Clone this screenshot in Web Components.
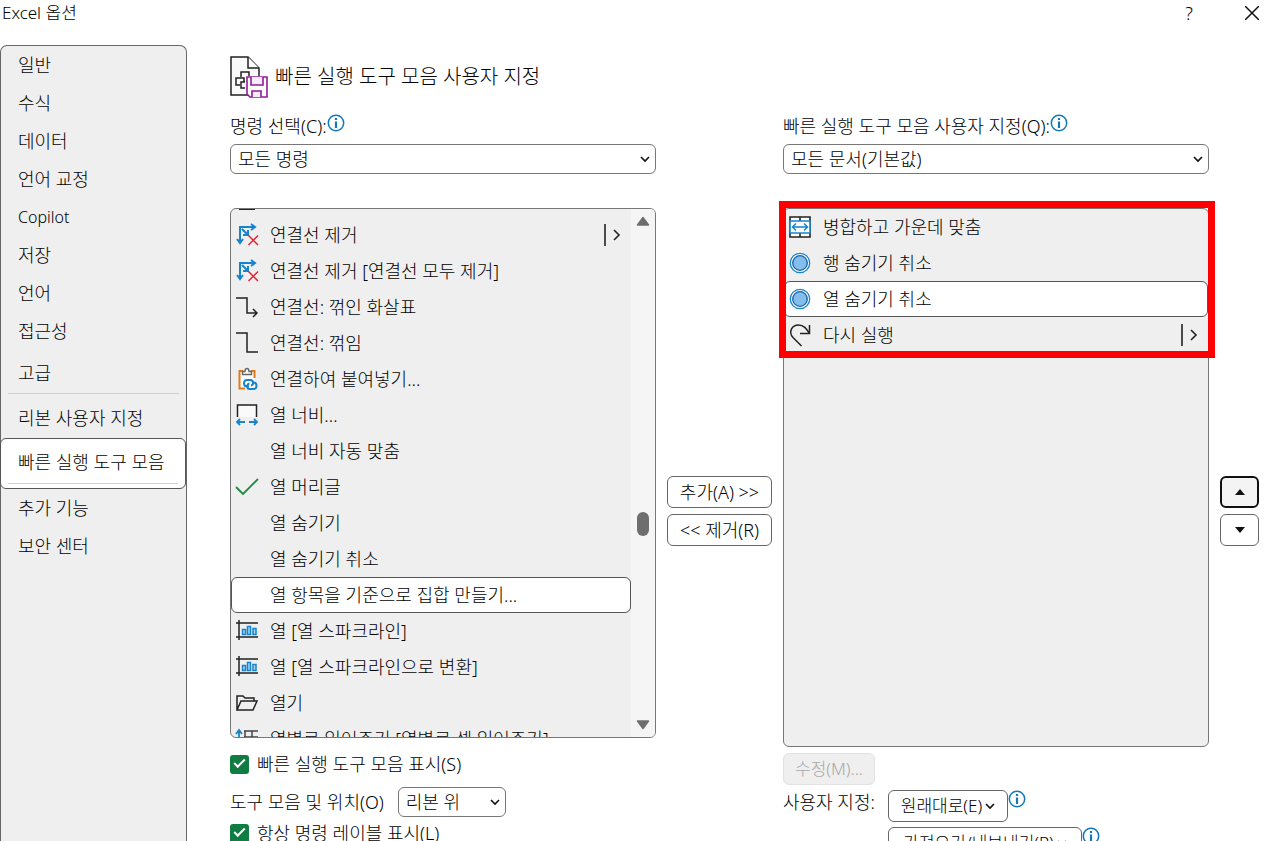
<!DOCTYPE html>
<html lang="ko">
<head>
<meta charset="utf-8">
<title>Excel 옵션</title>
<style>
  body { margin: 0; background: #fff; color: #000; font: 300 18px/24px "Noto Sans", "Noto Sans CJK KR", sans-serif; }
</style>
</head>
<body>
<options-window>
  <option-nav slot="nav">
    <nav-item>일반</nav-item>
    <nav-item>수식</nav-item>
    <nav-item>데이터</nav-item>
    <nav-item>언어 교정</nav-item>
    <nav-item latin>Copilot</nav-item>
    <nav-item>저장</nav-item>
    <nav-item>언어</nav-item>
    <nav-item>접근성</nav-item>
    <nav-item divided>고급</nav-item>
    <nav-item>리본 사용자 지정</nav-item>
    <nav-item selected>빠른 실행 도구 모음</nav-item>
    <nav-item>추가 기능</nav-item>
    <nav-item>보안 센터</nav-item>
  </option-nav>
  <toolbar-page></toolbar-page>
</options-window>

<script>
const define = (name, html, setup) => {
  const template = document.createElement('template');
  template.innerHTML = html;
  customElements.define(name, class extends HTMLElement {
    constructor() {
      super();
      this.attachShadow({ mode: 'open' }).append(template.content.cloneNode(true));
    }
    connectedCallback() { if (setup) setup(this, this.shadowRoot); }
  });
};

const ICONS = {
  removeConnector: `<g fill="none" stroke="#1683cc" stroke-width="2"><path d="M4 18V3H18M15 0l4 3-4 3M1 15l3 4 3-4"/><path d="M6 5l6 6M12 6v5H7"/></g><path d="M12.500 11.500l9.500 9.500M22 11.500l-9.500 9.500" fill="none" stroke="#e02330" stroke-width="1.500"/>`,
  sparkline: `<path d="M0 3h22M0 17h22M3 0v20" fill="none" stroke="#222" stroke-width="1.500"/><path d="M6.500 9.500h3v5h-3zM11.500 6.500h3v8h-3zM17 8.500h3v6h-3z" fill="#a9d6f5" stroke="#1683cc" stroke-width="1.500"/>`,
  dot: `<circle cx="11" cy="11" r="9.700" fill="#fff" stroke="#1683cc" stroke-width="1.300"/><circle cx="11" cy="11" r="7.300" fill="#83beec" stroke="#185fa5" stroke-width="1.300"/>`,
  elbowArrow: `<path d="M0 2h11v15h10M17 13l4 4-4 4" fill="none" stroke="#222" stroke-width="1.500"/>`,
  elbow: `<path d="M0 1h11v19h11" fill="none" stroke="#222" stroke-width="1.500"/>`,
  pasteLink: `<path d="M4 3.500v17h15v-17z" fill="#fff"/><path d="M7 3H3.500v17.500H9M15 3h3.500v7" fill="none" stroke="#e07a16" stroke-width="2"/><path d="M6.500 6.500V3.500H9C9 -.5 13 -.5 13 3.500h2.500v3z" fill="#fff" stroke="#666" stroke-width="1.400"/><path d="M13 18.500h-2c-4 0-4-6.500 0-6.500h3c4 0 4 5 1 5.500M16 14.500h1.500c4 0 4 6.500 0 6.500h-4c-3 0-3-5 0-5.500" fill="none" stroke="#1683cc" stroke-width="2"/>`,
  columnWidth: `<path d="M1.500 13V1h19v12" fill="#fafafa" stroke="#222" stroke-width="1.500"/><path d="M1 18h8M13 18h8M4 15l-3 3 3 3M18 15l3 3-3 3" fill="none" stroke="#1683cc" stroke-width="1.800"/>`,
  check: `<path d="M0 11l7 7L22 3" fill="none" stroke="#1e8a3f" stroke-width="1.800"/>`,
  folder: `<path d="M1 18V4h6l2 2h9v3M1 18L5 9h16l-4 9z" fill="none" stroke="#222" stroke-width="1.500"/>`,
  readColumns: `<path d="M3 18V3M0 6l3-4 3 4" fill="none" stroke="#1683cc" stroke-width="1.800"/><path d="M8 3h14M8 9h14M8 15h14M9 3v17M16 3v17" fill="none" stroke="#444" stroke-width="1.500"/>`,
  merge: `<path d="M1 1h20v20H1zM11 1v4M11 17v4" fill="#fff" stroke="#222" stroke-width="1.600"/><path d="M1 5h20v12H1z" fill="#fff" stroke="#1683cc" stroke-width="1.600"/><path d="M4 11h14M7 7.500L3.500 11 7 14.500M15 7.500l3.500 3.500-3.500 3.500" fill="none" stroke="#1683cc" stroke-width="1.500"/>`,
  redo: `<path d="M12.500 22L4 13.500C-1 8 3 1 9.500 1c5.500 0 8 4 11 8.500M20.500 1v8.500H11" fill="none" stroke="#222" stroke-width="1.500"/>`
};

define('info-tip', `<style>:host{display:block;width:18px;height:18px;flex:none}svg{display:block}</style>
  <svg width="18" height="18" viewBox="0 0 18 18" role="img" aria-label="정보"><circle cx="9" cy="9" r="7.700" fill="#fff" stroke="#1079bd" stroke-width="1.500"/><path d="M9 4v2M9 7.500V14" stroke="#1079bd" stroke-width="2.200"/></svg>`);

define('nav-item', `<style>
    :host{display:block}
    a{display:block;padding:7px 17px;color:inherit;text-decoration:none;white-space:nowrap}
    :host([latin]) a{font-size:16px}
    :host([divided]){margin:4px 0 5px}
    :host([divided])::after,:host([selected]) a::after{content:"";display:block;height:1px;background:#cfcfcf;margin:1px 7px 0}
    :host([selected]){margin:1px 0 0 -1px}
    :host([selected]) a{background:#fff;border:1px solid #555;border-radius:6px;padding:11px 0 4px 17px}
    :host([selected]) a::after{margin:9px 7px 0 -10px}
  </style><a href="#"><slot></slot></a>`,
  (host, root) => { if (host.hasAttribute('selected')) root.querySelector('a').setAttribute('aria-current', 'page'); });

define('option-nav', `<style>
    :host{display:block;box-sizing:border-box;width:187px;flex:none;background:#efefef;border:1px solid #666;border-bottom:0;border-radius:7px 7px 0 0}
  </style><nav aria-label="Excel 옵션"><slot></slot></nav>`);

define('options-window', `<style>
    :host{display:flex;flex-direction:column;height:100vh;overflow:hidden}
    header{display:flex;align-items:center;height:26px;padding:0 20px 0 2px;margin-bottom:19px;flex:none}
    h1{font:inherit;font-size:17px;margin:0 auto 0 0}
    button{border:0;background:none;padding:0;color:inherit;font:inherit;width:18px;height:26px;display:grid;place-items:center}
    .close{margin-left:46px;width:16px}
    .frame{display:flex;flex:1;min-height:0}
    ::slotted(toolbar-page){flex:1;min-width:0}
  </style>
  <header><h1>Excel 옵션</h1><button aria-label="도움말">?</button>
    <button class="close" aria-label="닫기"><svg width="14" height="14" viewBox="0 0 14 14"><path d="M0 0l14 14M14 0L0 14" stroke="#111" stroke-width="1.500"/></svg></button></header>
  <div class="frame"><slot name="nav"></slot><slot></slot></div>`);

define('select-field', `<style>
    :host{display:block}
    .caption{display:flex;height:24px;margin-bottom:6px}
    .box{position:relative}
    select{appearance:none;display:block;box-sizing:border-box;width:100%;height:30px;padding:0 7px;border:1px solid #777;border-radius:6px;background:#fff;color:inherit;font:inherit}
    svg{position:absolute;right:6px;top:12px;pointer-events:none}
    :host([inline]){display:flex;align-items:center;gap:14px}
    :host([inline]) .caption{margin:0}
    :host([inline]) info-tip{display:none}
    :host([inline]) .box{width:108px}
  </style>
  <div class="caption"><label for="s"></label><info-tip></info-tip></div>
  <div class="box"><select id="s"><option></option></select><svg width="10" height="7" viewBox="0 0 10 7"><path d="M1 1l4 4 4-4" fill="none" stroke="#111" stroke-width="1.600"/></svg></div>`,
  (host, root) => {
    root.querySelector('label').textContent = host.getAttribute('label');
    root.querySelector('option').textContent = host.getAttribute('value');
  });

define('check-field', `<style>
    :host{display:block}
    label{display:flex;align-items:center;gap:8px}
    input{appearance:none;width:19px;height:19px;margin:0;border-radius:3px;background:#107c41;display:grid;place-items:center}
    input:checked::after{content:"";width:9px;height:4px;margin-bottom:4px;border:solid #fff;border-width:0 0 2px 2px;transform:rotate(-45deg)}
  </style><label><input type="checkbox" checked><span><slot></slot></span></label>`);

define('push-button', `<style>
    :host{display:block;font-size:17px}
    button{display:flex;align-items:center;justify-content:center;gap:3px;box-sizing:border-box;width:100%;height:32px;padding:0 10px;border:1px solid #666;border-radius:6px;background:#fff;color:inherit;font:inherit;white-space:nowrap}
    button:disabled{background:#efefef;border-color:#e2e2e2;color:#a8a8a8}
    :host([current]) button{border:2px solid #111;background:#f4f4f4}
  </style><button><slot></slot></button>`,
  (host, root) => {
    const button = root.querySelector('button');
    button.disabled = host.hasAttribute('disabled');
    if (host.hasAttribute('label')) button.setAttribute('aria-label', host.getAttribute('label'));
  });

define('command-item', `<style>
    :host{display:flex;align-items:center;gap:12px;box-sizing:border-box;height:36px;flex:none;padding:0 10px 0 5px;white-space:nowrap}
    :host([selected]){background:#fff;border:1px solid #555;border-radius:6px;padding:0 9px 0 4px}
    svg{flex:none}
    .icon{overflow:visible}
    .more{display:none;margin-left:auto}
    :host([menu]) .more{display:block}
  </style><svg class="icon" width="22" height="22" viewBox="0 0 22 22" aria-hidden="true"></svg><span><slot></slot></span>
  <svg class="more" width="17" height="22" viewBox="0 0 17 22"><path d="M1 0v22M10 6l5 5-5 5" fill="none" stroke="#222" stroke-width="1.600"/></svg>`,
  (host, root) => {
    host.setAttribute('role', 'option');
    host.setAttribute('aria-selected', host.hasAttribute('selected'));
    root.querySelector('.icon').innerHTML = ICONS[host.getAttribute('icon')] || '';
  });

define('command-list', `<style>
    :host{display:flex;box-sizing:border-box;border:1px solid #777;border-radius:6px;background:#efefef;overflow:hidden}
    .items{flex:1;min-width:0;display:flex;flex-direction:column}
    .bar{display:none;width:24px;background:#f5f5f5;flex-direction:column;align-items:center;padding:7px 0}
    :host([scrolled]) .bar{display:flex}
    :host([scrolled]) .items::before{content:"";width:16px;height:1px;margin:0 0 7px 8px;background:#222;flex:none}
    .above{flex:14}.below{flex:9}
    .thumb{width:12px;height:24px;border-radius:6px;background:#6e6e6e}
  </style>
  <div class="items" role="listbox"><slot></slot></div>
  <div class="bar" aria-hidden="true">
    <svg width="14" height="10" viewBox="0 0 14 10"><path d="M7 1.500L12.500 9h-11z" fill="#6e6e6e" stroke="#6e6e6e" stroke-width="1.500" stroke-linejoin="round"/></svg>
    <span class="above"></span><span class="thumb"></span><span class="below"></span>
    <svg width="14" height="10" viewBox="0 0 14 10"><path d="M7 8.500L12.500 1h-11z" fill="#6e6e6e" stroke="#6e6e6e" stroke-width="1.500" stroke-linejoin="round"/></svg>
  </div>`,
  (host, root) => root.querySelector('.items').setAttribute('aria-label', host.getAttribute('label')));

define('toolbar-page', `<style>
    :host{display:block;padding:11px 21px 0 43px}
    header{display:flex;align-items:center;gap:7px;margin-bottom:16px}
    h2{font:inherit;font-size:20px;margin:0}
    .columns{display:grid;grid-template-columns:minmax(0,1fr) 105px minmax(0,1fr) 39px;gap:11px}
    .list-box{position:relative;margin-top:34px}
    .available command-list{height:530px;margin-bottom:14px}
    .current command-list{height:539px;margin-bottom:6px}
    .available select-field[inline]{margin:11px 0 4px}
    .moves{padding-top:362px;display:flex;flex-direction:column;gap:6px}
    .moves push-button{font-size:18px}
    .highlight{position:absolute;inset:-7px -6px auto -4px;height:157px;box-sizing:border-box;border:7px solid #f00;pointer-events:none}
    .modify{width:92px}
    .custom{display:grid;grid-template-columns:105px auto;margin-top:5px;row-gap:5px}
    .line{display:flex}
    .reset{width:120px}.transfer{width:194px}
  </style>
  <header>
    <svg width="38" height="42" viewBox="0 0 38 42" aria-hidden="true">
      <path d="M18 39H1V1h17l11 11v8" fill="#fafafa" stroke="#222" stroke-width="1.500"/><path d="M18 1v11h11" fill="#fff" stroke="#222" stroke-width="1.500"/>
      <path d="M11 21v-5h8v4M10 29H6v-7h8v4M15 32h-4v-6h4" fill="none" stroke="#222" stroke-width="1.500"/>
      <path d="M17 21h20v20H20l-3-3z" fill="#fff" stroke="#8e1c9b" stroke-width="1.600"/><path d="M21 21v8h12v-8M22 41v-6h9v6" fill="#f7edf8" stroke="#8e1c9b" stroke-width="1.600"/>
    </svg>
    <h2>빠른 실행 도구 모음 사용자 지정</h2>
  </header>
  <div class="columns">
    <section class="available">
      <select-field label="명령 선택(C):" value="모든 명령"></select-field>
      <div class="list-box">
        <command-list scrolled label="명령">
          <command-item icon="removeConnector" menu>연결선 제거</command-item>
          <command-item icon="removeConnector">연결선 제거 [연결선 모두 제거]</command-item>
          <command-item icon="elbowArrow">연결선: 꺾인 화살표</command-item>
          <command-item icon="elbow">연결선: 꺾임</command-item>
          <command-item icon="pasteLink">연결하여 붙여넣기...</command-item>
          <command-item icon="columnWidth">열 너비...</command-item>
          <command-item>열 너비 자동 맞춤</command-item>
          <command-item icon="check">열 머리글</command-item>
          <command-item>열 숨기기</command-item>
          <command-item>열 숨기기 취소</command-item>
          <command-item selected>열 항목을 기준으로 집합 만들기...</command-item>
          <command-item icon="sparkline">열 [열 스파크라인]</command-item>
          <command-item icon="sparkline">열 [열 스파크라인으로 변환]</command-item>
          <command-item icon="folder">열기</command-item>
          <command-item icon="readColumns">열별로 읽어주기 [열별로 셀 읽어주기]</command-item>
        </command-list>
      </div>
      <check-field>빠른 실행 도구 모음 표시(S)</check-field>
      <select-field inline label="도구 모음 및 위치(O)" value="리본 위"></select-field>
      <check-field>항상 명령 레이블 표시(L)</check-field>
    </section>
    <div class="moves"><push-button>추가(A) &gt;&gt;</push-button><push-button>&lt;&lt; 제거(R)</push-button></div>
    <section class="current">
      <select-field label="빠른 실행 도구 모음 사용자 지정(Q):" value="모든 문서(기본값)"></select-field>
      <div class="list-box">
        <command-list label="빠른 실행 도구 모음">
          <command-item icon="merge">병합하고 가운데 맞춤</command-item>
          <command-item icon="dot">행 숨기기 취소</command-item>
          <command-item icon="dot" selected>열 숨기기 취소</command-item>
          <command-item icon="redo" menu>다시 실행</command-item>
        </command-list>
        <div class="highlight"></div>
      </div>
      <push-button class="modify" disabled>수정(M)...</push-button>
      <div class="custom">
        <span>사용자 지정:</span>
        <div class="line"><push-button class="reset">원래대로(E)<svg width="10" height="7" viewBox="0 0 10 7"><path d="M1 1l4 4 4-4" fill="none" stroke="#111" stroke-width="1.600"/></svg></push-button><info-tip></info-tip></div>
        <span></span>
        <div class="line"><push-button class="transfer">가져오기/내보내기(P)<svg width="10" height="7" viewBox="0 0 10 7"><path d="M1 1l4 4 4-4" fill="none" stroke="#111" stroke-width="1.600"/></svg></push-button><info-tip></info-tip></div>
      </div>
    </section>
    <div class="moves">
      <push-button current label="위로 이동"><svg width="10" height="6" viewBox="0 0 10 6"><path d="M0 6l5-6 5 6z" fill="#111"/></svg></push-button>
      <push-button label="아래로 이동"><svg width="10" height="6" viewBox="0 0 10 6"><path d="M0 0l5 6 5-6z" fill="#111"/></svg></push-button>
    </div>
  </div>`);
</script>
</body>
</html>
